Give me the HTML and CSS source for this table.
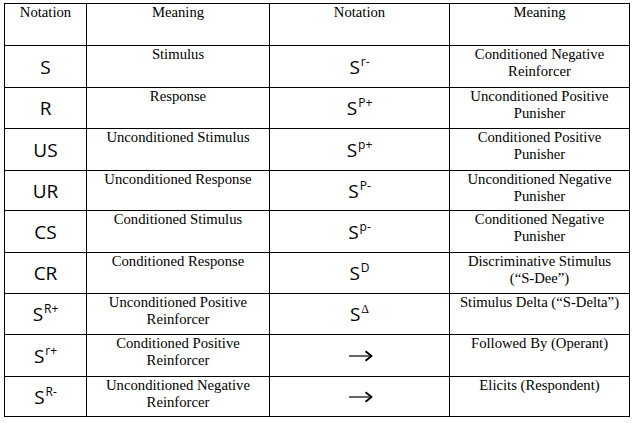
FILE: index.html
```html
<!DOCTYPE html>
<html>
<head>
<meta charset="utf-8">
<link rel="stylesheet" href="styles.css">
</head>
<body>
<table class="grid">
  <colgroup>
    <col class="c1"><col class="c2"><col class="c3"><col class="c4">
  </colgroup>
  <tr class="h42">
    <th class="head">Notation</th><th class="head">Meaning</th><th class="head">Notation</th><th class="head">Meaning</th>
  </tr>
  <tr class="h42">
    <td class="note">S</td><td class="mean">Stimulus</td>
    <td class="note">S<sup class="sp">r-</sup></td><td class="mean">Conditioned Negative<br>Reinforcer</td>
  </tr>
  <tr class="h41">
    <td class="note">R</td><td class="mean">Response</td>
    <td class="note">S<sup class="sp">P+</sup></td><td class="mean">Unconditioned Positive<br>Punisher</td>
  </tr>
  <tr class="h42">
    <td class="note">US</td><td class="mean">Unconditioned Stimulus</td>
    <td class="note">S<sup class="sp">p+</sup></td><td class="mean">Conditioned Positive<br>Punisher</td>
  </tr>
  <tr class="h40">
    <td class="note">UR</td><td class="mean">Unconditioned Response</td>
    <td class="note">S<sup class="sp">P-</sup></td><td class="mean">Unconditioned Negative<br>Punisher</td>
  </tr>
  <tr class="h42">
    <td class="note">CS</td><td class="mean">Conditioned Stimulus</td>
    <td class="note">S<sup class="sp">p-</sup></td><td class="mean">Conditioned Negative<br>Punisher</td>
  </tr>
  <tr class="h41">
    <td class="note">CR</td><td class="mean">Conditioned Response</td>
    <td class="note">S<sup class="sp">D</sup></td><td class="mean">Discriminative Stimulus<br>(“S-Dee”)</td>
  </tr>
  <tr class="h41">
    <td class="note">S<sup class="sp">R+</sup></td><td class="mean">Unconditioned Positive<br>Reinforcer</td>
    <td class="note">S<sup class="sp delta">Δ</sup></td><td class="mean">Stimulus Delta (“S-Delta”)</td>
  </tr>
  <tr class="h42">
    <td class="note">S<sup class="sp">r+</sup></td><td class="mean">Conditioned Positive<br>Reinforcer</td>
    <td class="arrow"><svg class="arrow-icon" width="24" height="12" viewBox="0 0 24 12" aria-label="→"><path d="M0 6 H22" stroke="#000" stroke-width="1.2" fill="none"/><path d="M16.5 1.2 L22.6 6 L16.5 10.8" stroke="#000" stroke-width="1.8" fill="none" stroke-linejoin="round"/></svg></td><td class="mean">Followed By (Operant)</td>
  </tr>
  <tr class="h40">
    <td class="note">S<sup class="sp">R-</sup></td><td class="mean">Unconditioned Negative<br>Reinforcer</td>
    <td class="arrow"><svg class="arrow-icon" width="24" height="12" viewBox="0 0 24 12" aria-label="→"><path d="M0 6 H22" stroke="#000" stroke-width="1.2" fill="none"/><path d="M16.5 1.2 L22.6 6 L16.5 10.8" stroke="#000" stroke-width="1.8" fill="none" stroke-linejoin="round"/></svg></td><td class="mean">Elicits (Respondent)</td>
  </tr>
</table>
</body>
</html>
```

FILE: styles.css
```css
html, body {
  margin: 0;
  padding: 0;
  background: #ffffff;
}
body {
  padding: 3px 0 0 4px;
  font-family: "Liberation Serif", "Times New Roman", serif;
  color: #000;
}
.grid {
  border-collapse: collapse;
  table-layout: fixed;
  width: 625px;
}
.c1 { width: 82px; }
.c2 { width: 183px; }
.c3 { width: 180px; }
.c4 { width: 180px; }
.grid th, .grid td {
  border: 1px solid #000;
  padding: 0;
  text-align: center;
  overflow: hidden;
  box-sizing: border-box;
}
.h42 { height: 42px; }
.h41 { height: 41px; }
.h40 { height: 40px; }
.head, .mean {
  font-family: "Liberation Serif", "Times New Roman", serif;
  font-weight: normal;
  font-size: 14.7px;
  line-height: 17px;
  vertical-align: top;
  padding-top: 2px;
}
.note {
  font-family: "Open Sans", "Noto Sans", sans-serif;
  font-size: 19px;
  line-height: 22px;
  vertical-align: middle;
  padding-bottom: 5px;
}
.sp {
  font-size: 12px;
  line-height: 0;
  vertical-align: 8px;
  margin-left: 1px;
}
.delta {
  font-family: "Liberation Serif", "Times New Roman", serif;
  font-size: 12px;
}
.arrow {
  vertical-align: middle;
  line-height: 0;
}
.arrow-icon {
  display: inline-block;
  margin-left: 2px;
}
```
